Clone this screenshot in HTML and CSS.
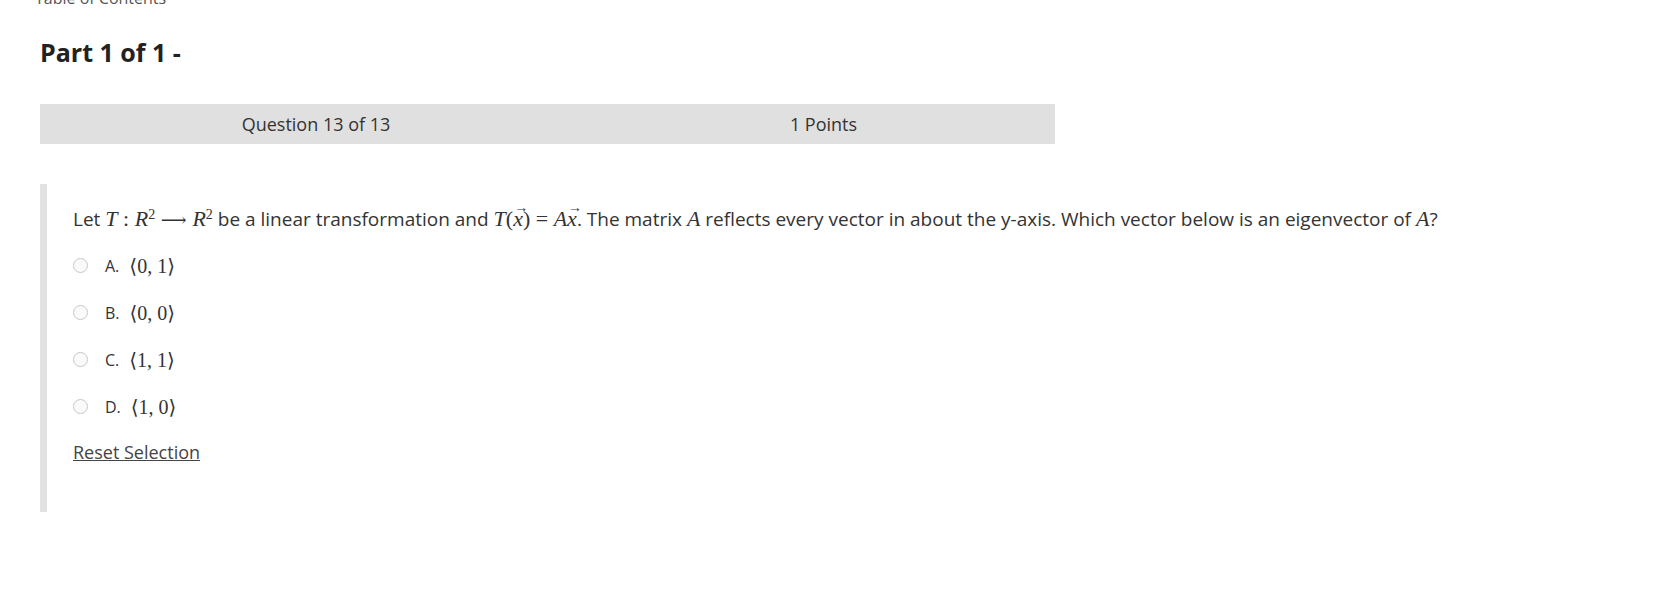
FILE: index.html
```html
<!DOCTYPE html>
<html>
<head>
<meta charset="utf-8">
<title>Quiz</title>
<link rel="stylesheet" href="styles.css">
</head>
<body>
<div class="page">
  <div class="toc">Table of Contents</div>
  <h2 class="part">Part 1 of 1 -</h2>
  <div class="qbar">
    <div class="qcell qnum">Question 13 of 13</div>
    <div class="qcell qpts">1 Points</div>
  </div>
  <div class="question">
    <p class="qtext">Let <span class="m">T</span><span class="mo"> : </span><span class="m">R</span><sup class="ms">2</sup><span class="mo arrow"> ⟶ </span><span class="m">R</span><sup class="ms">2</sup> be a linear transformation and <span class="m">T</span><span class="mn">(</span><span class="m vec">x</span><span class="mn">)</span><span class="mo"> = </span><span class="m">A</span><span class="m vec">x</span>. The matrix <span class="m">A</span> reflects every vector in about the y-axis. Which vector below is an eigenvector of <span class="m">A</span>?</p>
    <ul class="options">
      <li class="opt"><span class="radio"></span><span class="letter">A.</span><span class="on">⟨0, 1⟩</span></li>
      <li class="opt"><span class="radio"></span><span class="letter">B.</span><span class="on">⟨0, 0⟩</span></li>
      <li class="opt"><span class="radio"></span><span class="letter">C.</span><span class="on">⟨1, 1⟩</span></li>
      <li class="opt"><span class="radio"></span><span class="letter">D.</span><span class="on">⟨1, 0⟩</span></li>
    </ul>
    <a class="reset" href="#">Reset Selection</a>
  </div>
</div>
</body>
</html>
```
FILE: styles.css
```css
html, body {
  margin: 0;
  padding: 0;
  background: #ffffff;
}
body {
  font-family: "Open Sans", "Liberation Sans", sans-serif;
  color: #333333;
}
.page {
  padding-left: 40px;
}
.toc {
  font-size: 16px;
  line-height: 18px;
  margin-top: -11px;
  margin-left: -5px;
  color: #555555;
}
.part {
  font-size: 25px;
  font-weight: 700;
  line-height: 34px;
  margin: 28px 0 0 0;
  color: #222222;
}
.qbar {
  display: flex;
  width: 1015px;
  height: 40px;
  margin-top: 35px;
  background: #e0e0e0;
  font-size: 18px;
  color: #333333;
}
.qcell {
  display: flex;
  align-items: center;
  justify-content: center;
}
.qnum {
  width: 552px;
}
.qpts {
  flex: 1;
}
.question {
  margin-top: 40px;
  border-left: 7px solid #e2e2e2;
  padding: 23px 0 48px 26px;
  width: 1550px;
}
.qtext {
  margin: 0;
  font-size: 19px;
  line-height: 24px;
  white-space: nowrap;
}
.m, .mn, .mo {
  font-family: "Liberation Serif", "DejaVu Serif", serif;
  font-size: 22px;
}
.m {
  font-style: italic;
}
.arrow {
  font-family: "DejaVu Serif", "Liberation Serif", serif;
  font-size: 18px;
}
.ms {
  font-family: "Liberation Serif", "DejaVu Serif", serif;
  font-size: 14px;
  line-height: 0;
}
.vec {
  position: relative;
  display: inline-block;
}
.vec::after {
  content: "→";
  position: absolute;
  left: 1px;
  top: -11px;
  font-size: 14px;
  font-style: normal;
}
.options {
  list-style: none;
  margin: 10px 0 0 0;
  padding: 0;
}
.opt {
  display: flex;
  align-items: center;
  height: 47px;
  font-size: 16px;
}
.radio {
  box-sizing: border-box;
  width: 15px;
  height: 15px;
  border: 1px solid #c8c8c8;
  border-radius: 50%;
  background: #fafafa;
  margin-right: 17px;
}
.letter {
  margin-right: 10px;
}
.on {
  font-family: "Liberation Serif", "DejaVu Serif", serif;
  font-size: 20px;
}
.reset {
  display: block;
  margin-top: 10px;
  font-size: 18px;
  line-height: 24px;
  color: #444444;
  text-decoration: underline;
}
```
